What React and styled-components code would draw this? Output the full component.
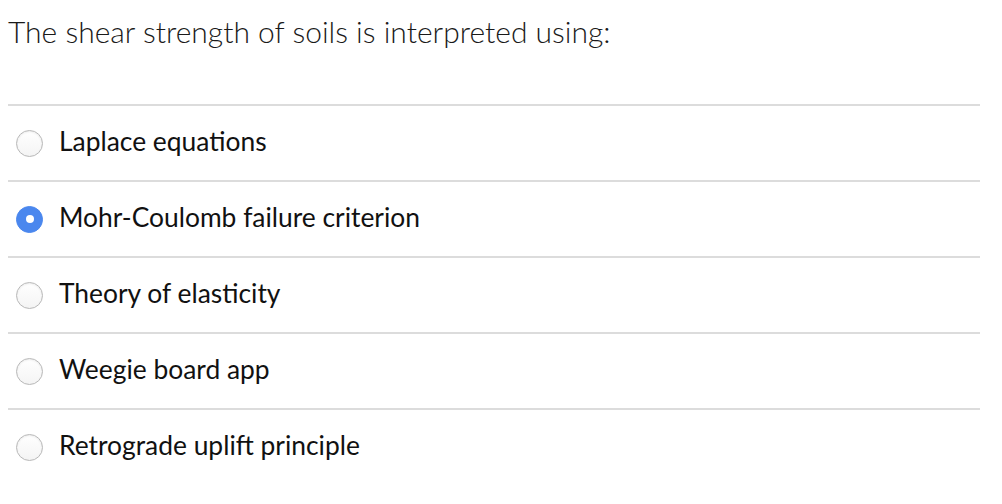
import React, { useState } from "react"
import styled, { createGlobalStyle } from "styled-components"

const options = [
  "Laplace equations",
  "Mohr-Coulomb failure criterion",
  "Theory of elasticity",
  "Weegie board app",
  "Retrograde uplift principle",
]

const App = () => {
  const [selected, setSelected] = useState(1)

  return (
    <>
      <GlobalStyle />
      <Quiz>
        <Question>The shear strength of soils is interpreted using:</Question>
        <OptionList>
          {options.map((label, index) => (
            <Option key={label} onClick={() => setSelected(index)}>
              <Radio $checked={selected === index} />
              <Label>{label}</Label>
            </Option>
          ))}
        </OptionList>
      </Quiz>
    </>
  )
}

const GlobalStyle = createGlobalStyle`
  body {
    margin: 0;
    background: #fff;
    font-family: Lato, "Open Sans", sans-serif;
    color: #111;
  }
`

const Quiz = styled.div`
  width: 972px;
  padding: 0 22px 0 8px;
`

const Question = styled.h1`
  margin: 0;
  height: 104px;
  padding-top: 11px;
  box-sizing: border-box;
  font-size: 30px;
  font-weight: 300;
  line-height: 40px;
  color: #1a1a1a;
`

const OptionList = styled.ul`
  list-style: none;
  margin: 0;
  padding: 0;
`

const Option = styled.li`
  display: flex;
  align-items: center;
  gap: 16px;
  height: 76px;
  box-sizing: border-box;
  border-top: 2px solid #dcdcdc;
  padding-left: 8px;
  cursor: pointer;
`

const Radio = styled.span`
  position: relative;
  width: 27px;
  height: 27px;
  box-sizing: border-box;
  border-radius: 50%;
  flex-shrink: 0;
  border: 1px solid ${({ $checked }) => ($checked ? "#4a87ee" : "#b8b8b8")};
  background: ${({ $checked }) =>
    $checked ? "#4a87ee" : "linear-gradient(#ffffff, #f4f4f4)"};
  box-shadow: ${({ $checked }) =>
    $checked ? "none" : "inset 0 1px 2px rgba(0,0,0,0.08)"};

  &::after {
    content: "";
    display: ${({ $checked }) => ($checked ? "block" : "none")};
    position: absolute;
    left: 50%;
    top: 50%;
    width: 8px;
    height: 8px;
    margin: -4px 0 0 -4px;
    border-radius: 50%;
    background: #fff;
  }
`

const Label = styled.span`
  font-size: 26.4px;
  line-height: 30px;
  margin-top: -4px;
  color: #111;
`

export default App
